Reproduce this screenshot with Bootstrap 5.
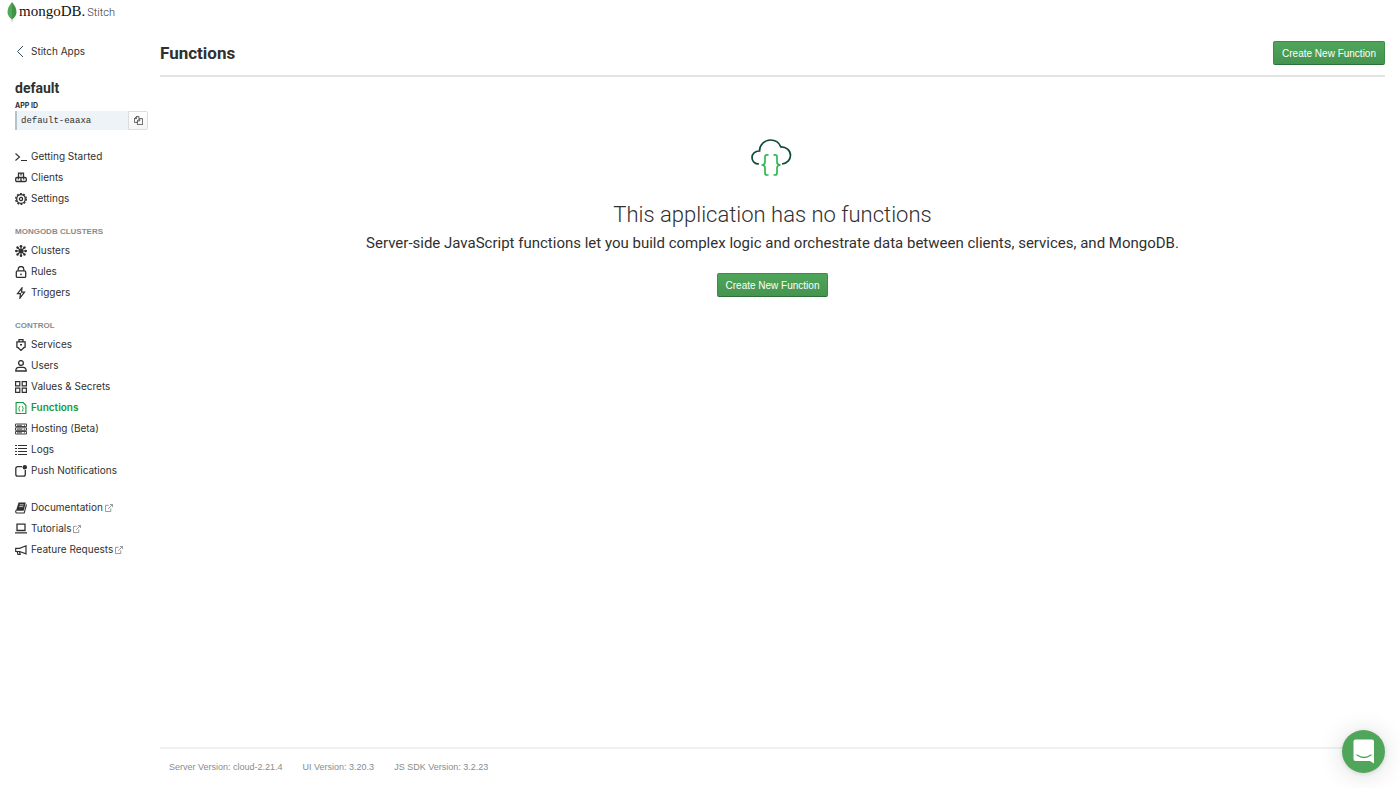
<!DOCTYPE html>
<html lang="en">
<head>
<meta charset="utf-8">
<meta name="viewport" content="width=device-width, initial-scale=1">
<title>Functions - MongoDB Stitch</title>
<link href="https://cdn.jsdelivr.net/npm/bootstrap@5.3.0/dist/css/bootstrap.min.css" rel="stylesheet">
<style>
  body { font-family: Inter, "Liberation Sans", Arial, sans-serif; font-size: 10px; line-height: 15px; color: #313030; background: #fff; }
  a { color: inherit; text-decoration: none; }
  svg { display: block; flex: none; }
  .ico { width: 12px; height: 12px; margin-right: 4px; fill: none; stroke: currentColor; stroke-width: 1.3; }
  .ext { width: 8px; height: 8px; margin-left: 2px; fill: none; stroke: #8a8c8d; stroke-width: 1; }
  .topbar { height: 27px; padding: 0 0 4px 7px; }
  .brand-name { font-family: "Liberation Serif", serif; font-size: 15px; color: #111; margin: 0 2px; }
  .brand-sub { font-family: Roboto, sans-serif; font-weight: 300; font-size: 11px; padding-top: 2px; }
  .side { width: 160px; padding: 14px 12px 0 15px; }
  .back { height: 21px; gap: 5px; }
  .app-title { font-family: Roboto, sans-serif; font-size: 14px; line-height: 18px; margin: 17px 0 4px; }
  .app-label { font-size: 7px; line-height: 10px; }
  .app-id { height: 19px; margin-bottom: 16px; }
  .app-id input { font: 9px/12px "Liberation Mono", monospace; color: #313030; background: #edf3f6; border: 0; border-left: 2px solid #b3c2cb; border-radius: 0; padding: 0 4px; min-width: 0; }
  .app-id button { width: 20px; border: 1px solid #ddd; border-radius: 0 2px 2px 0; background: linear-gradient(#fff, #f4f4f4); padding: 0; color: #313030; }
  .menu { margin-bottom: 16px; }
  .menu a { height: 21px; }
  .menu h2 { font-family: "Liberation Sans", Arial, sans-serif; font-size: 8px; line-height: 14px; font-weight: 700; color: #8a8c8a; margin: 0 0 1px; }
  .menu .current { color: #13993a; font-weight: 600; }
  .main { padding-right: 15px; }
  .page-head { height: 50px; border-bottom: 2px solid #e4e4e4; padding-top: 3px; }
  .page-head h1 { font-family: Roboto, sans-serif; font-size: 17px; line-height: 24px; }
  .btn-create { font: 10px/15px "Liberation Sans", Arial, sans-serif; padding: 4px 8px 3px; color: #fff; border: 1px solid #3b8c47; border-bottom-color: #2c7038; border-radius: 2px; background: linear-gradient(#4fa65b, #459350); }
  .btn-create:hover { color: #fff; background: #459350; }
  .empty { padding-top: 61px; }
  .empty h2 { font-family: Roboto, sans-serif; font-weight: 300; font-size: 22px; line-height: 32px; margin: 21px 0 0; }
  .empty p { font-family: Roboto, sans-serif; font-size: 15px; line-height: 24px; margin: 0 0 18px; }
  .foot { height: 41px; border-top: 2px solid #f0f0f0; padding: 0 0 2px 9px; gap: 20px; font-family: "Liberation Sans", Arial, sans-serif; font-size: 9px; color: #8a8c8a; }
  .chat { right: 15px; bottom: 15px; width: 43px; height: 43px; border: 0; background: #4fa65b; box-shadow: 0 1px 5px rgba(0,0,0,.12), 0 2px 26px rgba(0,0,0,.14); }
</style>
</head>
<body class="min-vh-100 d-flex flex-column">
<header class="topbar d-flex">
  <a href="#" class="d-flex align-items-center" aria-label="mongoDB Stitch">
    <svg width="10" height="20" viewBox="0 0 10 20"><path d="M5 0C2 4 .5 6.300 .5 10c0 3 1.800 5.500 4.500 7.500z" fill="#50aa55"/><path d="M5 0c3 4 4.500 6.300 4.500 10 0 3-1.800 5.500-4.500 7.500z" fill="#419348"/><path d="M5 17v2.500" stroke="#b8b8a0"/></svg>
    <span class="brand-name">mongo<span>DB</span>.</span><span class="brand-sub">Stitch</span>
  </a>
</header>
<div class="d-flex flex-grow-1">
  <nav class="side flex-shrink-0" aria-label="Application">
    <a href="#" class="back d-flex align-items-center"><svg width="11" height="12" viewBox="0 0 11 12" fill="none" stroke="#2f4f60"><path d="M8 0 2.500 5.500 8 11"/></svg>Stitch Apps</a>
    <div class="app-title fw-bold">default</div>
    <label for="appid" class="app-label fw-bold d-block">APP ID</label>
    <div class="app-id d-flex">
      <input id="appid" class="flex-grow-1 w-100" value="default-eaaxa" readonly>
      <button type="button" class="d-flex flex-shrink-0 align-items-center justify-content-center" aria-label="Copy App ID"><svg width="9" height="9" viewBox="0 0 12 12" fill="none" stroke="currentColor"><path d="M4.500 8.500h-4v-5l3-3h3v3M.5 3.500h3v-3M7.500 3.500h4v8h-7v-5zM4.500 6.500h3v-3"/></svg></button>
    </div>
    <div class="menu">
      <a href="#" class="d-flex align-items-center"><svg class="ico" viewBox="0 0 12 12"><path d="m.5 2.500 4 3.500-4 3.500M6 9.500h6" stroke-width="1.100"/></svg>Getting Started</a>
      <a href="#" class="d-flex align-items-center"><svg class="ico" viewBox="0 0 12 12"><path d="M3.500 1.200h5v4.300h-5zM2 5.500h8q1.300 0 1.300 1.300v1.400q0 1.300-1.300 1.300H2Q.7 9.500.7 8.200V6.800Q.7 5.500 2 5.500zM6 1v2.500M6 5.500v4M3.300 5.500v2M8.700 5.500v2"/></svg>Clients</a>
      <a href="#" class="d-flex align-items-center"><svg class="ico" viewBox="0 0 12 12"><circle cx="6" cy="6" r="4.300"/><circle cx="6" cy="6" r="5.300" stroke-dasharray="1.900 1.430" stroke-width="1.400"/><circle cx="6" cy="6" r="1.600"/></svg>Settings</a>
    </div>
    <div class="menu">
      <h2>MONGODB CLUSTERS</h2>
      <a href="#" class="d-flex align-items-center"><svg class="ico" viewBox="0 0 12 12"><path d="M6 1v10M1 6h10M2.500 2.500l7 7M9.500 2.500l-7 7" stroke-width="1.200"/><g fill="currentColor" stroke="none"><circle cx="6" cy="6" r="2.300"/><circle cx="6" cy="1.300" r="1.300"/><circle cx="6" cy="10.700" r="1.300"/><circle cx="1.300" cy="6" r="1.300"/><circle cx="10.700" cy="6" r="1.300"/><circle cx="2.500" cy="2.500" r="1.200"/><circle cx="9.500" cy="9.500" r="1.200"/><circle cx="9.500" cy="2.500" r="1.200"/><circle cx="2.500" cy="9.500" r="1.200"/></g></svg>Clusters</a>
      <a href="#" class="d-flex align-items-center"><svg class="ico" viewBox="0 0 12 12"><rect x="1.300" y="4.800" width="9.400" height="6.600" rx="1.200"/><path d="M3.200 4.800V3.300a2.800 2.800 0 0 1 5.600 0v1.500"/><circle cx="6" cy="8.300" r=".9" fill="currentColor" stroke="none"/></svg>Rules</a>
      <a href="#" class="d-flex align-items-center"><svg class="ico" viewBox="0 0 12 12"><path d="M7 .8 2.500 6.600h3L4.900 11.200 9.500 5.200H6.500z" stroke-width="1.200"/></svg>Triggers</a>
    </div>
    <div class="menu">
      <h2>CONTROL</h2>
      <a href="#" class="d-flex align-items-center"><svg class="ico" viewBox="0 0 12 12"><path d="M1.900 2.800h8.200v5.400Q8.800 8.500 8 9.500L6 11.400 4 9.500Q3.200 8.500 1.900 8.200zM4 2.800V.6h4v2.200"/><path d="M5 5.700h2" stroke-width="1.600"/></svg>Services</a>
      <a href="#" class="d-flex align-items-center"><svg class="ico" viewBox="0 0 12 12"><circle cx="6" cy="3" r="2.400"/><path d="M.8 11c0-2.500 1.500-3.700 3.200-3.700h4c1.700 0 3.200 1.200 3.200 3.700z"/></svg>Users</a>
      <a href="#" class="d-flex align-items-center"><svg class="ico" viewBox="0 0 12 12"><path d="M.6.6h4.200v4.200H.6zM7.200.6h4.200v4.200H7.200zM.6 7.200h4.200v4.200H.6zM7.200 7.200h4.200v4.200H7.200z" stroke-width="1.200"/></svg>Values &amp; Secrets</a>
      <a href="#" class="current d-flex align-items-center" aria-current="page"><svg class="ico" viewBox="0 0 12 12"><path d="M1.100.5h7l2.800 2.800v8.200H1.100z" stroke-width="1.100"/><path d="M5.200 4.300q-1 0-1 1v.8l-.7.7.7.7v.8q0 1 1 1M6.800 4.300q1 0 1 1v.8l.7.7-.7.7v.8q0 1-1 1" stroke-width="1"/></svg>Functions</a>
      <a href="#" class="d-flex align-items-center"><svg class="ico" viewBox="0 0 12 12"><path d="M.5 1h11v2.500H.5zM.5 4.800h11v2.500H.5zM.5 8.500h11V11H.5z" stroke-width=".9"/><path d="M2 2.300h5M2 6.100h5M2 9.800h5M9 2.300h1M9 6.100h1M9 9.800h1" stroke-width=".8"/></svg>Hosting (Beta)</a>
      <a href="#" class="d-flex align-items-center"><svg class="ico" viewBox="0 0 12 12"><path d="M0 1.500h2M0 4.500h2M0 7.500h2M0 10.500h2M3 1.500h9M3 4.500h9M3 7.500h9M3 10.500h9" stroke-width="1.200"/></svg>Logs</a>
      <a href="#" class="d-flex align-items-center"><svg class="ico" viewBox="0 0 12 12"><path d="M7 1.700H2.800Q.8 1.700.8 3.700v5.500q0 2 2 2h5.500q2 0 2-2V5"/><circle cx="9.800" cy="2.200" r="2.200" fill="currentColor" stroke="none"/></svg>Push Notifications</a>
    </div>
    <div class="menu">
      <a href="#" class="d-flex align-items-center"><svg class="ico" viewBox="0 0 12 12"><path d="M3.500.5h7.300L8.700 8.700H1z" fill="currentColor" stroke="none"/><path d="M1.200 8.300c-1 1.500-.3 2.700.5 2.700h7.500L11.500 2.500" stroke-width="1.100"/><path d="M4.700 2.800h4M4.200 4.600h4" stroke="#fff" stroke-width=".7"/></svg>Documentation<svg class="ext" viewBox="0 0 9 9"><path d="M4 1.500H.5v7h6V5M3.500 5.500l5-5M5.500.5h3v3"/></svg></a>
      <a href="#" class="d-flex align-items-center"><svg class="ico" viewBox="0 0 12 12"><path d="M2 1.200h8v6.300H2zM0 9.800h12"/></svg>Tutorials<svg class="ext" viewBox="0 0 9 9"><path d="M4 1.500H.5v7h6V5M3.500 5.500l5-5M5.500.5h3v3"/></svg></a>
      <a href="#" class="d-flex align-items-center"><svg class="ico" viewBox="0 0 12 12"><path d="M.7 4.300h4L11 1.800v8L4.700 7.500h-4zM2.200 7.500l.8 3h2.200l-.8-3" stroke-width="1.200"/></svg>Feature Requests<svg class="ext" viewBox="0 0 9 9"><path d="M4 1.500H.5v7h6V5M3.500 5.500l5-5M5.500.5h3v3"/></svg></a>
    </div>
  </nav>
  <div class="main flex-grow-1 d-flex flex-column">
    <main class="flex-grow-1">
      <div class="page-head d-flex align-items-center justify-content-between">
        <h1 class="fw-bold m-0">Functions</h1>
        <button type="button" class="btn btn-create">Create New Function</button>
      </div>
      <section class="empty d-flex flex-column align-items-center text-center">
        <svg width="48" height="40" viewBox="0 0 48 40" fill="none" stroke-width="1.700"><path d="M10 26C5.500 26 3 23 3 19.500s3-6.700 7.500-6.500C10.500 7 15.500 2 21.500 2c5 0 8.500 2.500 10.300 6.800C37 8.500 41.500 12.500 41.500 17.300c0 4.500-3.500 8.200-8.500 8.700" stroke="#0f4a3a"/><path d="M19.500 16.800H18q-2 0-2 2v5.200q0 3-3.500 3 3.500 0 3.500 3v5q0 2 2 2h1.500M24.500 16.800H26q2 0 2 2v5.200q0 3 3.500 3-3.500 0-3.500 3v5q0 2-2 2h-1.500" stroke="#2fb850"/></svg>
        <h2>This application has no functions</h2>
        <p>Server-side JavaScript functions let you build complex logic and orchestrate data between clients, services, and MongoDB.</p>
        <button type="button" class="btn btn-create">Create New Function</button>
      </section>
    </main>
    <footer class="foot d-flex align-items-center">
      <span>Server Version: cloud-2.21.4</span><span>UI Version: 3.20.3</span><span>JS SDK Version: 3.2.23</span>
    </footer>
  </div>
</div>
<button type="button" class="chat position-fixed rounded-circle d-flex align-items-center justify-content-center p-0" aria-label="Open chat">
  <svg width="22" height="25" viewBox="0 0 22 25"><path d="M2.500.5h16.500q2 0 2 2V24.500L17 22H2.500q-2 0-2-2V2.500q0-2 2-2z" fill="#fff"/><path d="M4 16q7 5 14 0" fill="none" stroke="#4fa65b" stroke-width="1.300" stroke-linecap="round"/></svg>
</button>
<script src="https://cdn.jsdelivr.net/npm/bootstrap@5.3.0/dist/js/bootstrap.bundle.min.js"></script>
</body>
</html>
